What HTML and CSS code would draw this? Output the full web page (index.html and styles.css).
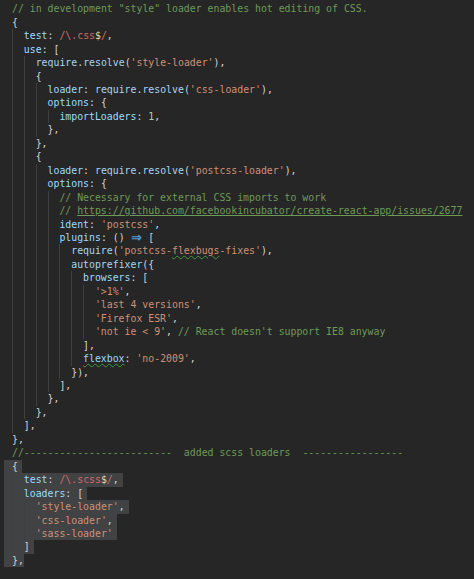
FILE: index.html
```html
<!DOCTYPE html>
<html>
<head>
<meta charset="utf-8">
<link rel="stylesheet" href="styles.css">
</head>
<body>
<div class="editor">
<div class="l"><span class="c">// in development "style" loader enables hot editing of CSS.</span></div>
<div class="l">{</div>
<div class="l"><i class="g"></i><span class="k">test</span>: <span class="r">/\.css</span><span class="d">$</span><span class="r">/</span>,</div>
<div class="l"><i class="g"></i><span class="k">use</span>: [</div>
<div class="l"><i class="g"></i><i class="g"></i><span class="f">require</span>.<span class="f">resolve</span>(<span class="s">'style-loader'</span>),</div>
<div class="l"><i class="g"></i><i class="g"></i>{</div>
<div class="l"><i class="g"></i><i class="g"></i><i class="g"></i><span class="k">loader</span>: <span class="f">require</span>.<span class="f">resolve</span>(<span class="s">'css-loader'</span>),</div>
<div class="l"><i class="g"></i><i class="g"></i><i class="g"></i><span class="k">options</span>: {</div>
<div class="l"><i class="g"></i><i class="g"></i><i class="g"></i><i class="g"></i><span class="k">importLoaders</span>: <span class="n">1</span>,</div>
<div class="l"><i class="g"></i><i class="g"></i><i class="g"></i>},</div>
<div class="l"><i class="g"></i><i class="g"></i>},</div>
<div class="l"><i class="g"></i><i class="g"></i>{</div>
<div class="l"><i class="g"></i><i class="g"></i><i class="g"></i><span class="k">loader</span>: <span class="f">require</span>.<span class="f">resolve</span>(<span class="s">'postcss-loader'</span>),</div>
<div class="l"><i class="g"></i><i class="g"></i><i class="g"></i><span class="k">options</span>: {</div>
<div class="l"><i class="g"></i><i class="g"></i><i class="g"></i><i class="g"></i><span class="c">// Necessary for external CSS imports to work</span></div>
<div class="l"><i class="g"></i><i class="g"></i><i class="g"></i><i class="g"></i><span class="c">// <span class="link">https://github.com/facebookincubator/create-react-app/issues/2677</span></span></div>
<div class="l"><i class="g"></i><i class="g"></i><i class="g"></i><i class="g"></i><span class="k">ident</span>: <span class="s">'postcss'</span>,</div>
<div class="l"><i class="g"></i><i class="g"></i><i class="g"></i><i class="g"></i><span class="k">plugins</span>: () <span class="a">⇒</span> [</div>
<div class="l"><i class="g"></i><i class="g"></i><i class="g"></i><i class="g"></i><i class="g"></i><span class="f">require</span>(<span class="s">'postcss-<span class="sp">flexbugs</span>-fixes'</span>),</div>
<div class="l"><i class="g"></i><i class="g"></i><i class="g"></i><i class="g"></i><i class="g"></i><span class="f">autoprefixer</span>({</div>
<div class="l"><i class="g"></i><i class="g"></i><i class="g"></i><i class="g"></i><i class="g"></i><i class="g"></i><span class="k">browsers</span>: [</div>
<div class="l"><i class="g"></i><i class="g"></i><i class="g"></i><i class="g"></i><i class="g"></i><i class="g"></i><i class="g"></i><span class="s">'&gt;1%'</span>,</div>
<div class="l"><i class="g"></i><i class="g"></i><i class="g"></i><i class="g"></i><i class="g"></i><i class="g"></i><i class="g"></i><span class="s">'last 4 versions'</span>,</div>
<div class="l"><i class="g"></i><i class="g"></i><i class="g"></i><i class="g"></i><i class="g"></i><i class="g"></i><i class="g"></i><span class="s">'Firefox ESR'</span>,</div>
<div class="l"><i class="g"></i><i class="g"></i><i class="g"></i><i class="g"></i><i class="g"></i><i class="g"></i><i class="g"></i><span class="s">'not ie &lt; 9'</span>, <span class="c">// React doesn't support IE8 anyway</span></div>
<div class="l"><i class="g"></i><i class="g"></i><i class="g"></i><i class="g"></i><i class="g"></i><i class="g"></i>],</div>
<div class="l"><i class="g"></i><i class="g"></i><i class="g"></i><i class="g"></i><i class="g"></i><i class="g"></i><span class="k sp">flexbox</span>: <span class="s">'no-2009'</span>,</div>
<div class="l"><i class="g"></i><i class="g"></i><i class="g"></i><i class="g"></i><i class="g"></i>}),</div>
<div class="l"><i class="g"></i><i class="g"></i><i class="g"></i><i class="g"></i>],</div>
<div class="l"><i class="g"></i><i class="g"></i><i class="g"></i>},</div>
<div class="l"><i class="g"></i><i class="g"></i>},</div>
<div class="l"><i class="g"></i>],</div>
<div class="l">},</div>
<div class="l"><span class="c">//-------------------------  added scss loaders  -----------------</span></div>
<div class="l"><span class="sel">{</span></div>
<div class="l"><span class="sel"><i class="g"></i><span class="k">test</span>: <span class="r">/\.scss</span><span class="d">$</span><span class="r">/</span>,</span></div>
<div class="l"><span class="sel"><i class="g"></i><span class="k">loaders</span>: [</span></div>
<div class="l"><span class="sel"><i class="g"></i><i class="g"></i><span class="s">'style-loader'</span>,</span></div>
<div class="l"><span class="sel"><i class="g"></i><i class="g"></i><span class="s">'css-loader'</span>,</span></div>
<div class="l"><span class="sel"><i class="g"></i><i class="g"></i><span class="s">'sass-loader'</span></span></div>
<div class="l"><span class="sel"><i class="g"></i>]</span></div>
<div class="l"><span class="sel last">},</span></div>
</div>
</body>
</html>
```

FILE: styles.css
```css
html, body {
  margin: 0;
  padding: 0;
  background: #262626;
}

.editor {
  padding: 2.3px 0 0 12px;
  font-family: "DejaVu Sans Mono", "Liberation Mono", monospace;
  font-size: 9.85px;
  color: #d4d4d4;
  overflow: hidden;
  height: 576px;
}

.l {
  height: 13.46px;
  line-height: 13.46px;
  white-space: pre;
}

.g {
  display: inline-block;
  width: 2ch;
  height: 13.46px;
  vertical-align: top;
  box-sizing: border-box;
  border-left: 1px solid #3f3f3f;
}

.c { color: #6d9a57; }
.k { color: #9cdcfe; }
.f { color: #a9d4f2; }
.s { color: #ce9178; }
.n { color: #b5cea8; }
.r { color: #d16969; }
.d { color: #dcdcaa; }

.a {
  color: #569cd6;
  display: inline-block;
  width: 11.86px;
  height: 13.46px;
  line-height: 13.46px;
  vertical-align: top;
  text-align: center;
  font-family: "DejaVu Sans", sans-serif;
  font-size: 13px;
  font-weight: bold;
}

.link {
  text-decoration: underline;
  text-decoration-color: #6d9a57;
  text-underline-offset: 1px;
}

.sp {
  text-decoration: underline wavy #3f9a3f;
  text-decoration-thickness: 1px;
  text-underline-offset: 1px;
}

.sel {
  display: inline-block;
  height: 13.46px;
  vertical-align: top;
  background: #414244;
  margin-left: -8px;
  padding-left: 8px;
  padding-right: 4px;
}

.sel.last {
  padding-right: 0;
}
```
